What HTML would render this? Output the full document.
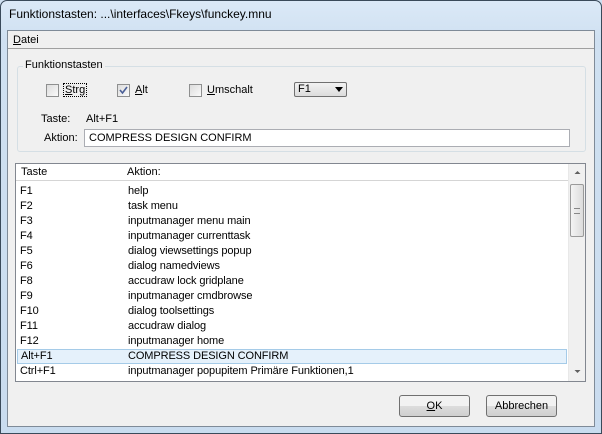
<!DOCTYPE html>
<html><head><style>
*{margin:0;padding:0;box-sizing:border-box}
body{width:602px;height:434px;overflow:hidden;background:#cfe0f1;font-family:"Liberation Sans",sans-serif;font-size:11px;color:#000;position:relative}
.frame{position:absolute;left:0;top:0;width:602px;height:434px;border:1px solid #3a4a5a;border-radius:7px 7px 0 0;background:linear-gradient(#dbe9f7,#cfe0f1 40px,#c9dcef)}
.title{position:absolute;left:9px;top:7px;font-size:12px;color:#000}
.client{position:absolute;left:7px;top:30px;width:588px;height:397px;background:#f0f0f0;border:1px solid #7f8b98}
.abs{position:absolute}
.cb{position:absolute;width:13px;height:13px;border:1px solid #8e8f8f;background:linear-gradient(135deg,#dcdcdc,#fafafa)}
u{text-decoration:underline}
.row{position:absolute;left:4px;height:15px;line-height:15px;width:550px;letter-spacing:-0.1px}
.row span{position:absolute;left:108px}
.btn{position:absolute;height:22px;border:1px solid #707070;border-radius:3px;background:linear-gradient(#f2f2f2 50%,#dddddd 50%,#cfcfcf);text-align:center;line-height:20px}
</style></head><body>
<div class="frame"></div>
<div class="title">Funktionstasten: ...\interfaces\Fkeys\funckey.mnu</div>
<div class="client">
 <div class="abs" style="left:5px;top:3px"><u>D</u>atei</div>
 <div class="abs" style="left:0;top:17px;width:586px;height:1px;background:#a0a0a0"></div>
 <div class="abs" style="left:9px;top:35px;width:569px;height:86px;border:1px solid #d5dfe5;border-radius:3px"></div>
 <div class="abs" style="left:15px;top:28px;background:#f0f0f0;padding:0 2px">Funktionstasten</div>
 <div class="cb" style="left:38px;top:53px"></div>
 <div class="abs" style="left:55px;top:52px;border:1px dotted #000;padding:0 1px"><u>S</u>trg</div>
 <div class="cb" style="left:109px;top:53px"><svg width="11" height="11" style="position:absolute;left:0;top:0"><path d="M2 5 L4.5 8 L9 2" stroke="#4a5f97" stroke-width="1.6" fill="none"/></svg></div>
 <div class="abs" style="left:127px;top:53px"><u>A</u>lt</div>
 <div class="cb" style="left:181px;top:53px"></div>
 <div class="abs" style="left:199px;top:53px"><u>U</u>mschalt</div>
 <div class="abs" style="left:286px;top:51px;width:53px;height:15px;border:1px solid #707070;border-radius:2px;background:linear-gradient(#f2f2f2,#dcdcdc);padding-left:3px;line-height:13px">F1<svg width="8" height="5" style="position:absolute;left:40px;top:4px"><path d="M0 0H8L4 5Z" fill="#000"/></svg></div>
 <div class="abs" style="left:33px;top:82px">Taste:</div>
 <div class="abs" style="left:78px;top:82px">Alt+F1</div>
 <div class="abs" style="left:36px;top:101px">Aktion:</div>
 <div class="abs" style="left:76px;top:98px;width:486px;height:18px;border:1px solid #abadb3;background:#fff;padding-left:4px;line-height:16px">COMPRESS DESIGN CONFIRM</div>
 <div class="abs" style="left:7px;top:132px;width:571px;height:219px;border:1px solid #828790;background:#fff">
  <div class="abs" style="left:0;top:0;width:552px;height:17px;border-bottom:1px solid #d5d5d5;line-height:17px"><span style="position:absolute;left:5px">Taste</span><span style="position:absolute;left:111px">Aktion:</span></div>
  <div class="abs" style="left:552px;top:0;width:17px;height:217px;background:#f0f0f0;border-left:1px solid #e8e8e8">
   <svg width="17" height="17" style="position:absolute;top:0"><path d="M5.5 10L8.5 7L11.5 10Z" fill="#606060"/></svg>
   <div class="abs" style="left:1px;top:20px;width:14px;height:53px;border:1px solid #9a9a9a;border-radius:2px;background:linear-gradient(90deg,#f4f4f4,#dcdcdc)"><div class="abs" style="left:3px;top:23px;width:6px;height:6px;border-top:1px solid #888;border-bottom:1px solid #888"></div></div>
   <svg width="17" height="17" style="position:absolute;top:199px"><path d="M5.5 7L8.5 10L11.5 7Z" fill="#606060"/></svg>
  </div>
  <div class="row" style="top:20px">F1<span>help</span></div>
  <div class="row" style="top:35px">F2<span>task menu</span></div>
  <div class="row" style="top:50px">F3<span>inputmanager menu main</span></div>
  <div class="row" style="top:65px">F4<span>inputmanager currenttask</span></div>
  <div class="row" style="top:80px">F5<span>dialog viewsettings popup</span></div>
  <div class="row" style="top:95px">F6<span>dialog namedviews</span></div>
  <div class="row" style="top:110px">F8<span>accudraw lock gridplane</span></div>
  <div class="row" style="top:125px">F9<span>inputmanager cmdbrowse</span></div>
  <div class="row" style="top:140px">F10<span>dialog toolsettings</span></div>
  <div class="row" style="top:155px">F11<span>accudraw dialog</span></div>
  <div class="row" style="top:170px">F12<span>inputmanager home</span></div>
  <div class="row" style="top:185px;left:1px;padding-left:3px;width:550px;background:#e5f1fb;border:1px solid #a5cbe8;line-height:13px">Alt+F1<span style="left:110px">COMPRESS DESIGN CONFIRM</span></div>
  <div class="row" style="top:200px">Ctrl+F1<span>inputmanager popupitem Primäre Funktionen,1</span></div>
 </div>
 <div class="btn" style="left:391px;top:364px;width:71px"><u>O</u>K</div>
 <div class="btn" style="left:478px;top:364px;width:71px">Abbrechen</div>
</div>
</body></html>
